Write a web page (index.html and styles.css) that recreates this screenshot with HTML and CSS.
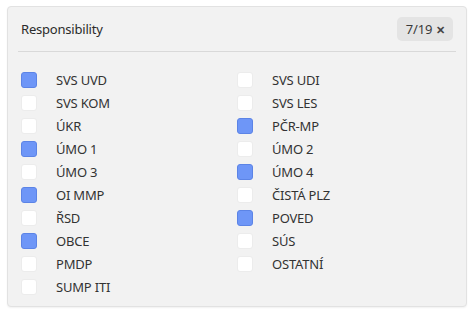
FILE: index.html
```html
<!DOCTYPE html>
<html>
  <head>
    <meta charset="utf-8">
    <link rel="stylesheet" href="styles.css">
  </head>
  <body>
    <div class="panel">
      <div class="panel-head">
        <span class="title">Responsibility</span>
        <button class="count">7/19 <span class="x">✕</span></button>
      </div>
      <div class="options">
        <label class="opt"><span class="box on"></span>SVS UVD</label>
        <label class="opt"><span class="box"></span>SVS KOM</label>
        <label class="opt"><span class="box"></span>ÚKR</label>
        <label class="opt"><span class="box on"></span>ÚMO 1</label>
        <label class="opt"><span class="box"></span>ÚMO 3</label>
        <label class="opt"><span class="box on"></span>OI MMP</label>
        <label class="opt"><span class="box"></span>ŘSD</label>
        <label class="opt"><span class="box on"></span>OBCE</label>
        <label class="opt"><span class="box"></span>PMDP</label>
        <label class="opt"><span class="box"></span>SUMP ITI</label>
        <label class="opt"><span class="box"></span>SVS UDI</label>
        <label class="opt"><span class="box"></span>SVS LES</label>
        <label class="opt"><span class="box on"></span>PČR-MP</label>
        <label class="opt"><span class="box"></span>ÚMO 2</label>
        <label class="opt"><span class="box on"></span>ÚMO 4</label>
        <label class="opt"><span class="box"></span>ČISTÁ PLZ</label>
        <label class="opt"><span class="box on"></span>POVED</label>
        <label class="opt"><span class="box"></span>SÚS</label>
        <label class="opt"><span class="box"></span>OSTATNÍ</label>
      </div>
    </div>
  </body>
</html>
```
FILE: styles.css
```css
body {
  margin: 0;
  background: #ffffff;
  font-family: "Noto Sans", "Open Sans", sans-serif;
  font-size: 13px;
  letter-spacing: -0.2px;
  color: #333333;
}

.panel {
  margin: 6px 7px;
  width: 460px;
  height: 301px;
  box-sizing: border-box;
  background: #f2f2f2;
  border: 1px solid #e2e2e2;
  border-radius: 4px;
  box-shadow: 0 1px 2px rgba(0, 0, 0, 0.06);
}

.panel-head {
  display: flex;
  align-items: center;
  justify-content: space-between;
  margin: 0 10px;
  padding: 10px 3px 10px 3px;
  height: 45px;
  box-sizing: border-box;
  border-bottom: 1px solid #d9d9d9;
}

.title {
  color: #2b2b2b;
}

.count {
  display: flex;
  align-items: center;
  gap: 4px;
  font-family: inherit;
  font-size: 13px;
  letter-spacing: -0.2px;
  color: #3a3a3a;
  background: #e4e4e4;
  border: none;
  border-radius: 5px;
  padding: 0 8px 0 9px;
  height: 24px;
}

.count .x {
  font-size: 11px;
  font-weight: bold;
  color: #444444;
}

.options {
  display: grid;
  grid-template-columns: 216px 216px;
  grid-template-rows: repeat(10, 23px);
  grid-auto-flow: column;
  padding: 16px 0 0 13px;
}

.opt {
  display: flex;
  align-items: center;
  gap: 19px;
  color: #333333;
}

.box {
  width: 16px;
  height: 16px;
  box-sizing: border-box;
  background: #ffffff;
  border: 1px solid #ececec;
  border-radius: 3px;
}

.box.on {
  background: #6e96f7;
  border-color: #5c84e6;
}
```
